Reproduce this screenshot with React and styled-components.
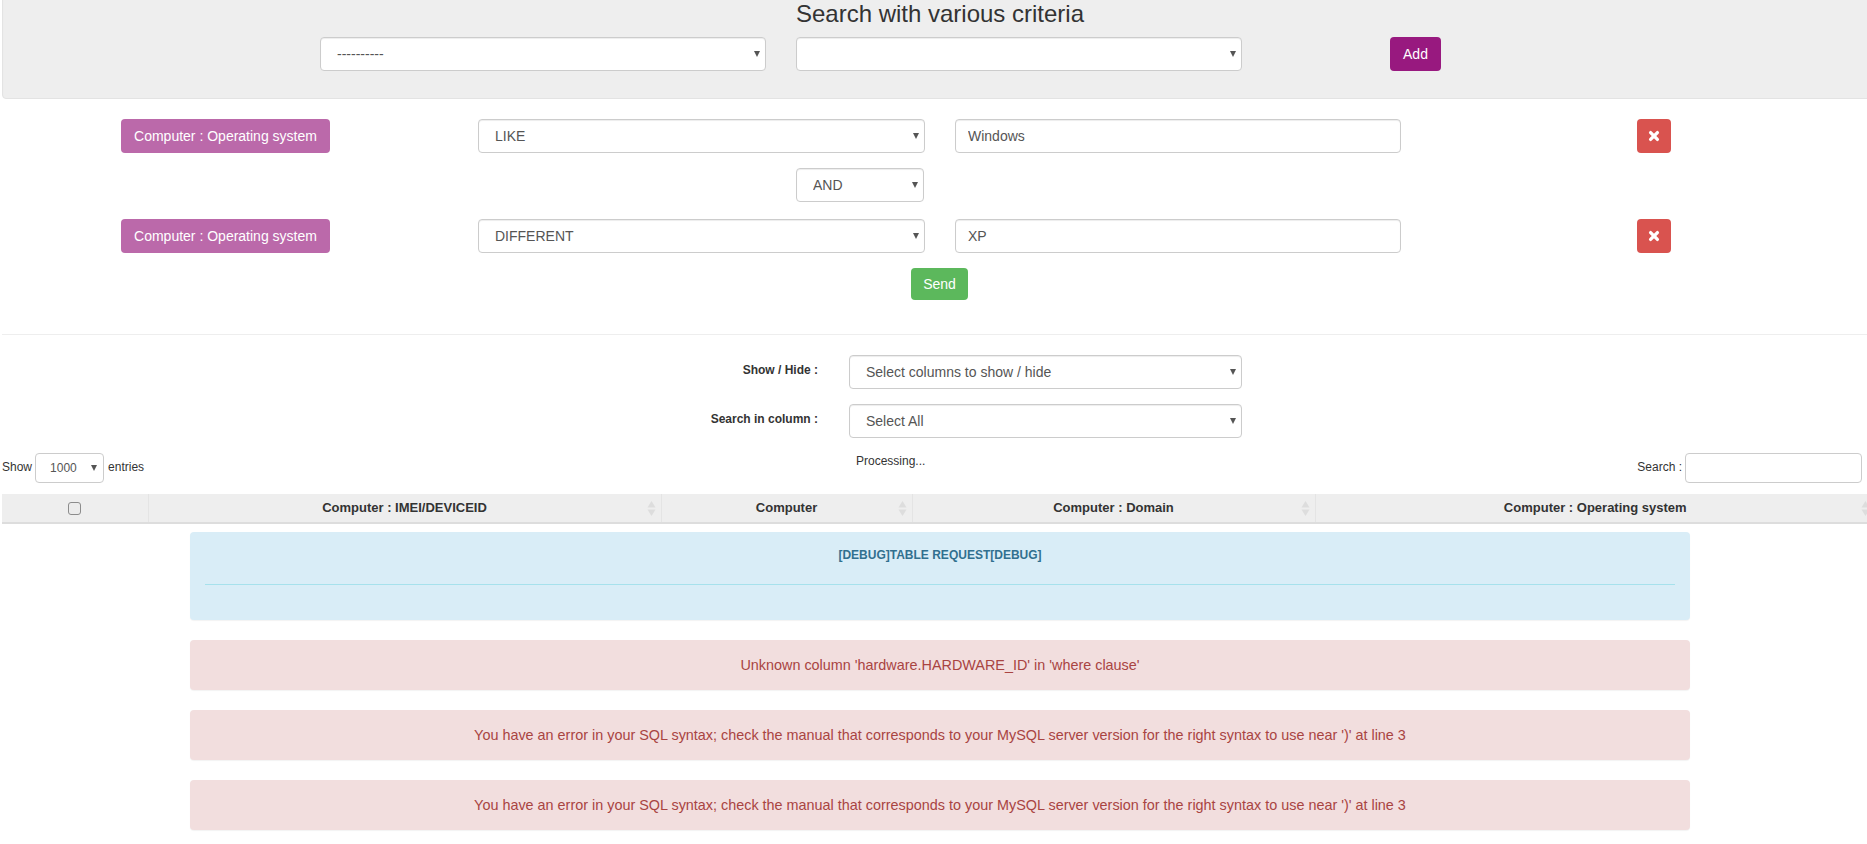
import React from 'react';
import styled, { createGlobalStyle } from 'styled-components';

const GlobalStyle = createGlobalStyle`
  html, body {
    margin: 0;
    padding: 0;
    background: #fff;
    overflow: hidden;
  }
  body {
    font-family: "Liberation Sans", Arial, sans-serif;
    font-size: 14px;
    line-height: 20px;
    color: #333;
  }
  * {
    box-sizing: border-box;
  }
`;

// small solid arrow of the old native select
const selectArrow = `url("data:image/svg+xml,%3Csvg xmlns='http://www.w3.org/2000/svg' width='6' height='6'%3E%3Cpath d='M0 0h6L3 6z' fill='%23555'/%3E%3C/svg%3E")`;

const Page = styled.div`
  width: 1867px;
  height: 844px;
  overflow: hidden;
`;

const Panel = styled.div`
  margin: -6px 0 0 2px;
  width: 1876px;
  height: 105px;
  background: #eee;
  border: 1px solid #e3e3e3;
  border-radius: 4px;
  box-shadow: inset 0 1px 1px rgba(0,0,0,0.05);
  padding-top: 6px;
`;

const Title = styled.h3`
  margin: 0;
  text-align: center;
  font-size: 24px;
  line-height: 26px;
  font-weight: 500;
  color: #333;
`;

const PanelRow = styled.div`
  display: flex;
  gap: 30px;
  margin-top: 10px;
  padding-left: 317px;
`;

const Control = styled.select`
  display: block;
  appearance: none;
  height: 34px;
  width: ${props => props.$width || 446}px;
  padding: 6px 16px;
  font-family: inherit;
  font-size: 14px;
  line-height: 20px;
  color: #555;
  background: #fff ${selectArrow} no-repeat right 5px center;
  border: 1px solid #ccc;
  border-radius: 4px;
  box-shadow: inset 0 1px 1px rgba(0,0,0,0.075);
`;

const Button = styled.button`
  height: 34px;
  padding: 6px 12px;
  font-family: inherit;
  font-size: 14px;
  line-height: 20px;
  color: #fff;
  border: 1px solid transparent;
  border-radius: 4px;
  cursor: pointer;
`;

const AddButton = styled(Button)`
  width: 51px;
  padding: 0;
  margin-left: 118px;
  background: #98197f;
`;

const Criteria = styled.div`
  padding: 20px 0 0 121px;
`;

const CriteriaRow = styled.div`
  display: flex;
`;

const TagButton = styled(Button)`
  width: 209px;
  padding: 0;
  background: #bb69aa;
`;

const OperatorSelect = styled(Control)`
  margin-left: 148px;
`;

const ValueInput = styled.input`
  display: block;
  width: 446px;
  height: 34px;
  margin-left: 30px;
  padding: 6px 12px;
  font-family: inherit;
  font-size: 14px;
  line-height: 20px;
  color: #555;
  background: #fff;
  border: 1px solid #ccc;
  border-radius: 4px;
  box-shadow: inset 0 1px 1px rgba(0,0,0,0.075);
`;

const RemoveButton = styled(Button)`
  width: 34px;
  padding: 0;
  margin-left: 236px;
  background: #d9534f;
  display: flex;
  align-items: center;
  justify-content: center;
`;

const LogicRow = styled.div`
  padding-left: 675px;
  margin: 15px 0 17px;
`;

const SendRow = styled.div`
  padding-left: 790px;
  margin-top: 15px;
`;

const SendButton = styled(Button)`
  width: 57px;
  height: 32px;
  padding: 0;
  background: #5cb85c;
`;

const Divider = styled.hr`
  margin: 34px 0 20px 2px;
  height: 0;
  border: 0;
  border-top: 1px solid #eee;
`;

const OptionRow = styled.div`
  display: flex;
  align-items: flex-start;
  margin-bottom: 15px;
`;

const OptionLabel = styled.label`
  width: 818px;
  margin-right: 31px;
  padding-top: 5px;
  text-align: right;
  font-size: 12px;
  font-weight: 700;
  line-height: 20px;
  color: #333;
`;

const TableTools = styled.div`
  display: flex;
  align-items: flex-start;
  height: 30px;
  margin: 0 5px 11px 2px;
  font-size: 12px;
  line-height: 28px;
  color: #333;
  position: relative;
`;

const LengthSelect = styled.select`
  appearance: none;
  width: 69px;
  height: 30px;
  margin: 0 4px 0 3px;
  padding: 5px 14px;
  font-family: inherit;
  font-size: 12px;
  color: #555;
  background: #fff ${selectArrow} no-repeat right 6px center;
  border: 1px solid #ccc;
  border-radius: 4px;
`;

const Processing = styled.div`
  position: absolute;
  left: 854px;
  top: 0;
  line-height: 17px;
`;

const SearchLabel = styled.label`
  margin-left: auto;
  display: flex;
  align-items: flex-start;
  gap: 3px;
`;

const SearchInput = styled.input`
  width: 177px;
  height: 30px;
  background: #fff;
  border: 1px solid #ccc;
  border-radius: 4px;
`;

const Table = styled.table`
  width: 1873px;
  margin-left: 2px;
  border-collapse: collapse;
  table-layout: fixed;
`;

const HeadCell = styled.th`
  position: relative;
  width: ${props => props.$width}px;
  height: 29px;
  padding: 0;
  background: #eee;
  border-left: 1px solid #e4e4e4;
  border-bottom: 2px solid #ddd;
  text-align: center;
  font-size: 13px;
  line-height: 18px;
  font-weight: 700;
  color: #333;

  &:first-child {
    border-left: 0;
  }
`;

const CheckBox = styled.input`
  appearance: none;
  display: block;
  width: 13px;
  height: 13px;
  margin: 1px auto 0;
  background: #ececec;
  border: 1px solid #8c8c8c;
  border-radius: 3px;
`;

const SortIcon = styled.svg`
  position: absolute;
  right: 5px;
  top: 7px;
  width: 9px;
  height: 15px;
  fill: #ddd;
`;

const Alerts = styled.div`
  width: 1500px;
  margin: 8px 0 0 190px;
`;

const Alert = styled.div`
  padding: 15px;
  margin-bottom: 20px;
  border-radius: 4px;
  text-align: center;
  font-size: 14.4px;
  line-height: 20px;
  box-shadow: 0 1px 1px rgba(0,0,0,0.05);
  background: ${props => props.$kind === 'info' ? '#d9edf7' : '#f2dede'};
  color: ${props => props.$kind === 'info' ? '#31708f' : '#a94442'};
`;

const DebugTitle = styled.b`
  display: block;
  margin-top: -2px;
  font-size: 12px;
  line-height: 20px;
`;

const DebugRule = styled.hr`
  height: 0;
  margin: 19px 0 20px;
  border: 0;
  border-top: 1px solid #a6e1ec;
`;

const columns = [
  { width: 513, label: 'Computer : IMEI/DEVICEID' },
  { width: 251, label: 'Computer' },
  { width: 403, label: 'Computer : Domain' },
  { width: 560, label: 'Computer : Operating system' },
];

const criteria = [
  { operator: 'LIKE', value: 'Windows' },
  { operator: 'DIFFERENT', value: 'XP' },
];

const sqlError = "You have an error in your SQL syntax; check the manual that corresponds to your MySQL server version for the right syntax to use near ')' at line 3";

const RemoveIcon = () => (
  <svg width="12" height="12" viewBox="0 0 12 12">
    <path d="M2.6 2.6l6.8 6.8M9.4 2.6l-6.8 6.8" stroke="#fff" strokeWidth="3.3" strokeLinecap="round" fill="none" />
  </svg>
);

const SortArrows = () => (
  <SortIcon viewBox="0 0 9 15">
    <path d="M4.5 0L8.5 6.5H0.5z" />
    <path d="M4.5 15L0.5 8.5H8.5z" />
  </SortIcon>
);

const App = () => {
  return (
    <Page>
      <GlobalStyle />
      <Panel>
        <Title>Search with various criteria</Title>
        <PanelRow>
          <Control defaultValue="">
            <option value="">----------</option>
          </Control>
          <Control />
          <AddButton>Add</AddButton>
        </PanelRow>
      </Panel>

      <Criteria>
        {criteria.map((item, index) => (
          <React.Fragment key={item.operator}>
            {index > 0 && (
              <LogicRow>
                <Control $width={128}>
                  <option>AND</option>
                </Control>
              </LogicRow>
            )}
            <CriteriaRow>
              <TagButton>Computer : Operating system</TagButton>
              <OperatorSelect $width={447}>
                <option>{item.operator}</option>
              </OperatorSelect>
              <ValueInput defaultValue={item.value} />
              <RemoveButton><RemoveIcon /></RemoveButton>
            </CriteriaRow>
          </React.Fragment>
        ))}
        <SendRow>
          <SendButton>Send</SendButton>
        </SendRow>
      </Criteria>

      <Divider />

      <OptionRow>
        <OptionLabel>Show / Hide :</OptionLabel>
        <Control $width={393}>
          <option>Select columns to show / hide</option>
        </Control>
      </OptionRow>
      <OptionRow>
        <OptionLabel>Search in column :</OptionLabel>
        <Control $width={393}>
          <option>Select All</option>
        </Control>
      </OptionRow>

      <TableTools>
        Show
        <LengthSelect>
          <option>1000</option>
        </LengthSelect>
        entries
        <Processing>Processing...</Processing>
        <SearchLabel>
          Search :
          <SearchInput />
        </SearchLabel>
      </TableTools>

      <Table>
        <thead>
          <tr>
            <HeadCell $width={146}><CheckBox type="checkbox" /></HeadCell>
            {columns.map((col) => (
              <HeadCell key={col.label} $width={col.width}>
                {col.label}
                <SortArrows />
              </HeadCell>
            ))}
          </tr>
        </thead>
      </Table>

      <Alerts>
        <Alert $kind="info">
          <DebugTitle>[DEBUG]TABLE REQUEST[DEBUG]</DebugTitle>
          <DebugRule />
        </Alert>
        <Alert>Unknown column 'hardware.HARDWARE_ID' in 'where clause'</Alert>
        <Alert>{sqlError}</Alert>
        <Alert>{sqlError}</Alert>
      </Alerts>
    </Page>
  );
};

export default App;
